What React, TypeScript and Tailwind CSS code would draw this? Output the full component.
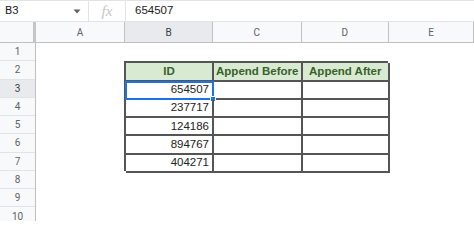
const columns = [
  { label: "A", w: "w-[89px]", active: false },
  { label: "B", w: "w-[88px]", active: true },
  { label: "C", w: "w-[88.5px]", active: false },
  { label: "D", w: "w-[87.5px]", active: false },
  { label: "E", w: "flex-1", active: false },
];

const ids = ["654507", "237717", "124186", "894767", "404271"];

const FormulaBar = () => (
  <div className="flex h-[22px] items-center border-t border-b border-[#e1e3e6] bg-white font-['Liberation_Sans',Arial,sans-serif] text-[11.5px] text-[#202124]">
    {/* Name box */}
    <div className="flex h-full w-[89px] items-center justify-between border-r border-[#e1e3e6] pl-[5px] pr-[7px]">
      <span className="font-['Roboto',sans-serif] text-[11.5px]">B3</span>
      <svg width="8" height="5" viewBox="0 0 8 5" className="mt-[1px]">
        <path d="M0.5 0.5 L7.5 0.5 L4 4.5 Z" fill="#5f6368" />
      </svg>
    </div>
    <div className="flex h-full w-[37px] items-center justify-center border-r border-[#e1e3e6]">
      <span className="font-['Liberation_Serif',serif] text-[15px] italic leading-none text-[#c4c7c5]">fx</span>
    </div>
    <span className="pl-[9px]">654507</span>
  </div>
);

const App = () => {
  return (
    <div className="h-[221px] w-[474px] overflow-hidden bg-white">
      <FormulaBar />

      {/* Column headers */}
      <div className="flex h-[21px] border-b border-[#c0c0c0] bg-[#f8f9fa] font-['Roboto',sans-serif] text-[10px] text-[#5f6368]">
        <div className="h-full w-[36px] border-r-[3px] border-[#c4c7c5] bg-[#f8f9fa]" />
        {columns.map((c) => (
          <div
            key={c.label}
            className={`${c.w} flex h-full items-center justify-center border-r border-[#c0c0c0] ${c.active ? "bg-[#e8eaed] text-[#3c4043]" : ""}`}
          >
            {c.label}
          </div>
        ))}
      </div>

      {/* Body */}
      <div className="flex">
        {/* Row headers */}
        <div className="flex w-[36px] flex-col border-r border-[#c0c0c0] font-['Roboto',sans-serif] text-[10px] text-[#5f6368]">
          {Array.from({ length: 10 }, (_, i) => (
            <div
              key={i}
              className={`flex h-[18.27px] shrink-0 items-center justify-center border-b border-[#e1e3e6] ${i === 2 ? "bg-[#e8eaed] text-[#3c4043]" : "bg-[#f8f9fa]"}`}
            >
              {i + 1}
            </div>
          ))}
        </div>

        {/* Cells */}
        <div className="grid flex-1 grid-cols-[88px_88px_88.5px_87.5px_1fr] grid-rows-[repeat(10,18.27px)] font-['Liberation_Sans',Arial,sans-serif] text-[11.5px] text-[#222]">
          <div className="col-span-3 col-start-2 row-span-6 row-start-2 grid grid-cols-[88px_88.5px_87.5px] grid-rows-[repeat(6,18.27px)] border-t-2 border-l-2 border-[#555]">
            {/* Header row */}
            <div className="flex items-center justify-center border-r-2 border-b-2 border-[#555] bg-[#d9ead3] font-bold text-[#38602a]">ID</div>
            <div className="flex items-center justify-center border-r-2 border-b-2 border-[#555] bg-[#d9ead3] font-bold text-[#38602a]">Append Before</div>
            <div className="flex items-center justify-center border-r-2 border-b-2 border-[#555] bg-[#d9ead3] font-bold text-[#38602a]">Append After</div>

            {ids.map((id, i) => (
              <div key={id} className="contents">
                <div className="relative flex items-center justify-end border-r-2 border-b-2 border-[#555] pr-[3px]">
                  {id}
                  {i === 0 && (
                    <div className="absolute -top-[1px] -left-[1px] -right-[2px] -bottom-[2px] border-2 border-[#1a73e8]">
                      <div className="absolute -right-[4px] -bottom-[4px] h-[6px] w-[6px] border border-white bg-[#1a73e8]" />
                    </div>
                  )}
                </div>
                <div className="border-r-2 border-b-2 border-[#555]" />
                <div className="border-r-2 border-b-2 border-[#555]" />
              </div>
            ))}
          </div>
        </div>
      </div>
    </div>
  );
};

export default App;
